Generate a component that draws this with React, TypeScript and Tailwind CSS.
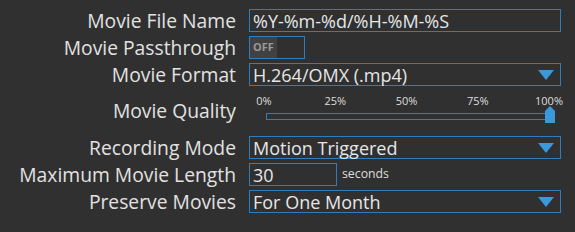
import { useState } from "react";

const FONT = { fontFamily: "'Open Sans', 'DejaVu Sans', sans-serif" };

function Row({ label, className = "h-[27px]", children }: { label: string; className?: string; children: React.ReactNode }) {
  return (
    <div className={`flex items-center ${className}`}>
      <div className="w-[236px] shrink-0 text-right text-[19.3px] leading-none text-[#e2e2e2]">{label}</div>
      <div className="ml-[13px] flex items-center">{children}</div>
    </div>
  );
}

function Select({ value }: { value: string }) {
  return (
    <div className="flex h-[23px] w-[312px] items-center justify-between border border-[#2f7dbd] pl-[3px] pr-[6px] text-[18px] text-[#e6e6e6]">
      <span className="leading-none">{value}</span>
      <svg width="16" height="10" viewBox="0 0 16 10" aria-hidden="true">
        <polygon points="0,0 16,0 8,10" fill="#3a98db" />
      </svg>
    </div>
  );
}

function QualitySlider() {
  const ticks = ["0%", "25%", "50%", "75%", "100%"];
  return (
    <div className="relative h-[46px] w-[312px]">
      {ticks.map((t, i) => (
        <span
          key={t}
          className="absolute top-[7px] -translate-x-1/2 text-[11px] leading-none text-[#dedede]"
          style={{ left: 15 + i * 71.25 }}
        >
          {t}
        </span>
      ))}
      <div className="absolute left-[17px] top-[25px] h-[7px] w-[282px] border border-[#2f7dbd]" />
      <svg className="absolute left-[296px] top-[18px]" width="10" height="17" viewBox="0 0 10 17" aria-hidden="true">
        <polygon points="5,0 10,5 10,17 0,17 0,5" fill="#3a98db" />
      </svg>
    </div>
  );
}

export default function App() {
  const [passthrough] = useState(false);
  return (
    <div className="h-[232px] w-[575px] bg-[#303030] pt-[7px]" style={FONT}>
      <Row label="Movie File Name">
        <div className="flex h-[23px] w-[312px] items-center border border-[#2f7dbd] pl-[3px] text-[18px] leading-none text-[#e6e6e6]">
          %Y-%m-%d/%H-%M-%S
        </div>
      </Row>
      <Row label="Movie Passthrough">
        <div className="flex h-[23px] w-[56px] border border-[#2f7dbd]">
          <div className="flex w-[27px] items-center justify-center bg-[#414141] text-[11px] font-bold text-[#9a9a9a]">
            {passthrough ? "ON" : "OFF"}
          </div>
        </div>
      </Row>
      <Row label="Movie Format">
        <Select value="H.264/OMX (.mp4)" />
      </Row>
      <Row label="Movie Quality" className="h-[46px]">
        <QualitySlider />
      </Row>
      <Row label="Recording Mode">
        <Select value="Motion Triggered" />
      </Row>
      <Row label="Maximum Movie Length">
        <div className="flex h-[23px] w-[88px] items-center border border-[#2f7dbd] pl-[3px] text-[18px] leading-none text-[#e6e6e6]">
          30
        </div>
        <span className="ml-[5px] text-[12.3px] text-[#dedede]">seconds</span>
      </Row>
      <Row label="Preserve Movies">
        <Select value="For One Month" />
      </Row>
    </div>
  );
}
